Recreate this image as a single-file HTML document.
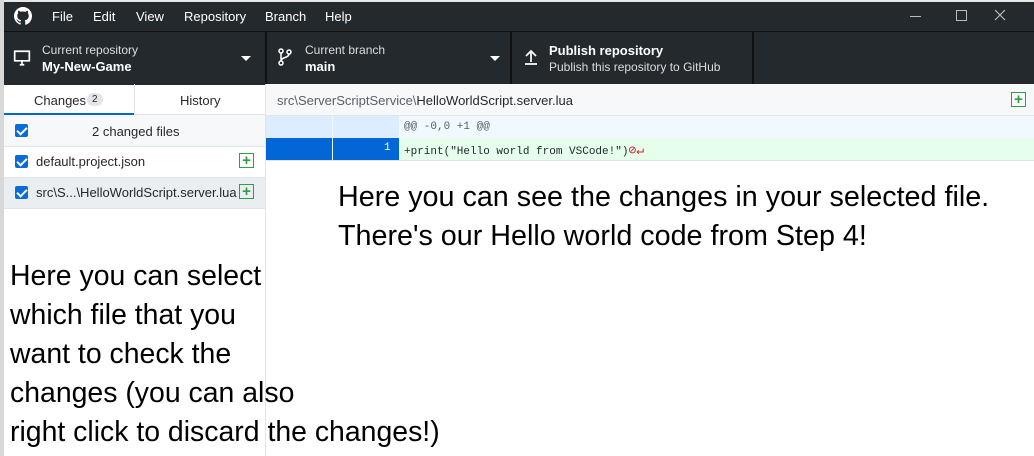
<!DOCTYPE html><html><head><style>
body{margin:0;width:1034px;height:456px;overflow:hidden;background:#fff;font-family:"Liberation Sans",sans-serif;position:relative}
.a{position:absolute}
.dark{background:#24292e;color:#fff}
.cb{position:absolute;width:13px;height:13px;background:#0a6cd6;border-radius:2px}
.cb:after{content:"";position:absolute;left:4px;top:1px;width:4px;height:8px;border:solid #fff;border-width:0 2px 2px 0;transform:rotate(45deg)}
.plus{position:absolute;width:13px;height:13px;border:1.5px solid #2ea043;color:#2ea043;font-size:15px;line-height:13px;text-align:center;font-weight:bold}
.big{position:absolute;font-size:29px;color:#000;white-space:nowrap;line-height:39px}
</style></head><body>
<div class="a" style="left:0;top:0;width:1034px;height:2px;background:#e6e6e6"></div>
<div class="a" style="left:0;top:0;width:4px;height:456px;background:#d8d8d8"></div>
<div class="a dark" style="left:4px;top:2px;width:1030px;height:29px;font-size:13px">
<svg class="a" style="left:10px;top:5px" width="18" height="18" viewBox="0 0 16 16"><path fill="#fff" d="M8 0C3.58 0 0 3.58 0 8c0 3.540 2.29 6.53 5.47 7.59.4.07.55-.17.55-.38v-1.33c-2.23.48-2.7-1.07-2.7-1.070-.36-.92-.89-1.17-.89-1.17-.73-.5.06-.49.06-.49.8.06 1.23.83 1.23.83.71 1.23 1.870.87 2.33.66.07-.52.28-.87.51-1.07-1.78-.2-3.64-.89-3.64-3.95 0-.87.31-1.59.82-2.15-.08-.2-.36-1.02.08-2.12 0 0 .67-.21 2.2.82A7.6 7.6 0 0 1 8 4.04c.68 0 1.36.09 2 .27 1.53-1.04 2.2-.82 2.2-.82.44 1.1.16 1.920.08 2.12.51.56.82 1.28.82 2.15 0 3.07-1.87 3.75-3.65 3.95.29.25.54.73.54 1.48v2.2c0 .21.15.46.55.38A8 8 0 0 0 16 8c0-4.42-3.58-8-8-8z"/></svg>
<span class="a" style="left:48px;top:7px">File</span><span class="a" style="left:89px;top:7px">Edit</span><span class="a" style="left:132px;top:7px">View</span><span class="a" style="left:180px;top:7px">Repository</span><span class="a" style="left:261px;top:7px">Branch</span><span class="a" style="left:321px;top:7px">Help</span>
<div class="a" style="left:906px;top:14px;width:11px;height:1px;background:#bbb"></div>
<div class="a" style="left:952px;top:8px;width:9px;height:9px;border:1px solid #bbb"></div>
<svg class="a" style="left:990px;top:7px" width="12" height="12"><path d="M1 1L11 11M11 1L1 11" stroke="#bbb" stroke-width="1.2"/></svg>
</div>
<div class="a dark" style="left:4px;top:31px;width:1030px;height:53px;border-top:1px solid #111">
<svg class="a" style="left:9px;top:17px" width="18" height="18" viewBox="0 0 16 16"><path fill="none" stroke="#fff" stroke-width="1.5" d="M1.5 2h13v8.5h-13z M6 14h4 M8 10.5v3.5"/></svg>
<span class="a" style="left:38px;top:11px;font-size:12px;color:#ddd">Current repository</span>
<span class="a" style="left:38px;top:27px;font-size:13px;font-weight:bold">My-New-Game</span>
<div class="a" style="left:237px;top:24px;border:5px solid transparent;border-top-color:#fff"></div>
<div class="a" style="left:261px;top:0;width:2px;height:53px;background:#111"></div>
<svg class="a" style="left:274px;top:16px" width="14" height="18" viewBox="0 0 14 18"><g fill="none" stroke="#fff" stroke-width="1.5"><circle cx="3" cy="3" r="2"/><circle cx="3" cy="15" r="2"/><circle cx="11" cy="4" r="2"/><path d="M3 5v8 M11 6c0 4-8 3-8 7"/></g></svg>
<span class="a" style="left:301px;top:11px;font-size:12px;color:#ddd">Current branch</span>
<span class="a" style="left:301px;top:27px;font-size:13px;font-weight:bold">main</span>
<div class="a" style="left:486px;top:24px;border:5px solid transparent;border-top-color:#fff"></div>
<div class="a" style="left:506px;top:0;width:2px;height:53px;background:#111"></div>
<svg class="a" style="left:520px;top:16px" width="14" height="18" viewBox="0 0 14 18"><path fill="none" stroke="#fff" stroke-width="1.7" d="M7 14V3 M2 8l5-5 5 5 M1 16h12"/></svg>
<span class="a" style="left:545px;top:11px;font-size:13px;font-weight:bold">Publish repository</span>
<span class="a" style="left:545px;top:28px;font-size:12px;color:#ddd">Publish this repository to GitHub</span>
<div class="a" style="left:748px;top:0;width:2px;height:53px;background:#111"></div>
</div>
<div class="a" style="left:265px;top:84px;width:1px;height:372px;background:#e1e4e8"></div>
<div class="a" style="left:4px;top:84px;width:130px;height:31px;border-bottom:2px solid #0366d6;box-sizing:border-box;font-size:13px;color:#24292e"><span class="a" style="left:30px;top:9px">Changes</span><span class="a" style="left:83px;top:9px;background:#e1e4e8;border-radius:8px;font-size:10px;padding:1px 5px">2</span></div>
<div class="a" style="left:134px;top:84px;width:131px;height:31px;border-left:1px solid #e1e4e8;box-sizing:border-box;font-size:13px;color:#24292e;border-bottom:1px solid #e1e4e8"><span class="a" style="left:45px;top:9px">History</span></div>
<div class="a" style="left:4px;top:115px;width:261px;height:31px;background:#f6f8fa;border-bottom:1px solid #e1e4e8;font-size:13px;color:#24292e"><div class="cb" style="left:11px;top:9px"></div><span class="a" style="left:88px;top:9px">2 changed files</span></div>
<div class="a" style="left:4px;top:147px;width:261px;height:30px;font-size:13px;color:#24292e;border-bottom:1px solid #e1e4e8"><div class="cb" style="left:11px;top:8px"></div><span class="a" style="left:32px;top:7px">default.project.json</span><div class="plus" style="left:235px;top:6px">+</div></div>
<div class="a" style="left:4px;top:178px;width:261px;height:30px;background:#ebeef1;font-size:13px;color:#24292e;border-bottom:1px solid #e1e4e8"><div class="cb" style="left:11px;top:8px"></div><span class="a" style="left:32px;top:7px">src\S...\HelloWorldScript.server.lua</span><div class="plus" style="left:235px;top:6px">+</div></div>
<div class="a" style="left:266px;top:84px;width:768px;height:31px;background:#f6f8fa;border-bottom:1px solid #e1e4e8;font-size:13px"><span class="a" style="left:11px;top:9px;color:#586069">src\ServerScriptService\<span style="color:#24292e">HelloWorldScript.server.lua</span></span><div class="plus" style="left:745px;top:8px">+</div></div>
<div class="a" style="left:266px;top:116px;width:768px;height:22px;background:#f1f8ff;font-family:'Liberation Mono',monospace;font-size:11px;color:#586069"><div class="a" style="left:0;top:0;width:66px;height:22px;background:#dbedff"></div><div class="a" style="left:67px;top:0;width:66px;height:22px;background:#dbedff"></div><span class="a" style="left:138px;top:5px">@@ -0,0 +1 @@</span></div>
<div class="a" style="left:266px;top:138px;width:768px;height:22px;background:#e6ffed;border-bottom:1px solid #e1e4e8;font-family:'Liberation Mono',monospace;font-size:11px;color:#24292e"><div class="a" style="left:0;top:0;width:66px;height:22px;background:#0366d6"></div><div class="a" style="left:67px;top:0;width:66px;height:22px;background:#0366d6"></div><span class="a" style="left:118px;top:4px;color:#fff">1</span><span class="a" style="left:138px;top:5px">+print("Hello world from VSCode!")<span style="color:#cb2431;font-size:13px">⊘↵</span></span></div>
<div class="big" style="left:338px;top:178px;transform-origin:0 0;transform:scaleX(0.99)">Here you can see the changes in your selected file.<br>There's our Hello world code from Step 4!</div>
<div class="big" style="left:10px;top:257px;transform-origin:0 0;transform:scaleX(0.98)">Here you can select<br>which file that you<br>want to check the<br>changes (you can also<br>right click to discard the changes!)</div>
</body></html>
